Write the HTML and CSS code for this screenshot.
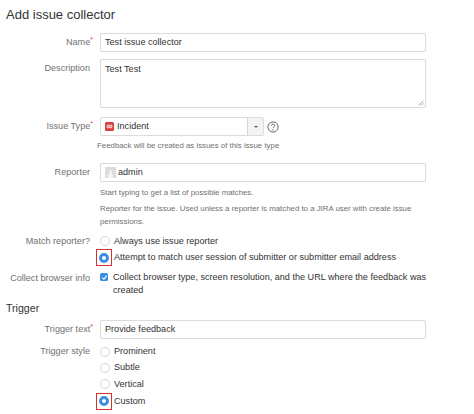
FILE: index.html
```html
<!DOCTYPE html>
<html lang="en">
<head>
  <meta charset="UTF-8">
  <title>Add issue collector</title>
  <link rel="stylesheet" href="styles.css">
</head>
<body>
<div class="page">
  <h1 class="title">Add issue collector</h1>

  <div class="row row-name">
    <div class="label">Name<span class="req">*</span></div>
    <div class="field"><div class="input">Test issue collector</div></div>
  </div>

  <div class="row row-description">
    <div class="label label-top">Description</div>
    <div class="field">
      <div class="input textarea">Test Test
        <svg class="grip" width="6" height="6" viewBox="0 0 6 6"><path d="M0.5 5.5L5.5 0.5M3 5.5L5.5 3" stroke="#8a8a8a" stroke-width="0.7" fill="none"/></svg>
      </div>
    </div>
  </div>

  <div class="row row-type">
    <div class="label">Issue Type<span class="req">*</span></div>
    <div class="field">
      <div class="type-line">
        <div class="input select">
          <div class="select-value">
            <svg class="type-icon" width="9" height="9" viewBox="0 0 9 9"><rect width="9" height="9" rx="1.5" fill="#d9403c"/><path d="M2.2 3.2h1.9v2.6H2.2zM4.9 3.2h1.9v2.6H4.9z" fill="none" stroke="#fff" stroke-width="0.8"/></svg>
            Incident
          </div>
          <div class="select-arrow"><span class="caret"></span></div>
        </div>
        <svg class="help" width="12" height="12" viewBox="0 0 12 12"><circle cx="6" cy="6" r="5.1" fill="none" stroke="#555" stroke-width="0.9"/><path d="M4.4 4.7c0-2.1 3.3-2.1 3.3 0 0 1.2-1.7 1.3-1.7 2.5" fill="none" stroke="#555" stroke-width="0.9"/><circle cx="6" cy="8.9" r="0.6" fill="#555"/></svg>
      </div>
      <div class="hint hint-type">Feedback will be created as issues of this issue type</div>
    </div>
  </div>

  <div class="row row-reporter">
    <div class="label">Reporter</div>
    <div class="field">
      <div class="input reporter">
        <svg class="avatar" width="11" height="11" viewBox="0 0 11 11"><rect width="11" height="11" fill="#dcdcdc"/><path d="M3 11V8.5L4.4 7V3.2h2.4V7l1.4 1.5V11z" fill="#f4f4f4"/></svg>
        admin
      </div>
      <div class="hint hint-first">Start typing to get a list of possible matches.</div>
      <div class="hint hint-second">Reporter for the issue. Used unless a reporter is matched to a JIRA user with create issue permissions.</div>
    </div>
  </div>

  <div class="row row-match">
    <div class="label">Match reporter?</div>
    <div class="field">
      <div class="option"><span class="radio"></span>Always use issue reporter</div>
      <div class="option"><span class="mark"><span class="radio checked"></span></span>Attempt to match user session of submitter or submitter email address</div>
    </div>
  </div>

  <div class="row row-browser">
    <div class="label">Collect browser info</div>
    <div class="field">
      <div class="option option-wrap">
        <span class="checkbox"><svg width="7" height="7" viewBox="0 0 7 7"><path d="M1.2 3.6L2.9 5.2L5.8 1.6" fill="none" stroke="#fff" stroke-width="1.1"/></svg></span>
        <span class="option-text">Collect browser type, screen resolution, and the URL where the feedback was created</span>
      </div>
    </div>
  </div>

  <h2 class="subtitle">Trigger</h2>

  <div class="row row-trigger">
    <div class="label">Trigger text<span class="req">*</span></div>
    <div class="field"><div class="input">Provide feedback</div></div>
  </div>

  <div class="row row-style">
    <div class="label">Trigger style</div>
    <div class="field">
      <div class="option"><span class="radio"></span>Prominent</div>
      <div class="option"><span class="radio"></span>Subtle</div>
      <div class="option"><span class="radio"></span>Vertical</div>
      <div class="option"><span class="mark"><span class="radio checked"></span></span>Custom</div>
    </div>
  </div>
</div>
</body>
</html>
```

FILE: styles.css
```css
body {
  margin: 0;
  background-color: #fff;
  color: #333;
  font-family: "Liberation Sans", Arial, sans-serif;
  font-size: 9.1px;
  overflow: hidden;
}

.page {
  padding: 7px 48px 0 6px;
}

.title {
  margin: 0;
  font-size: 13px;
  font-weight: normal;
  line-height: 16px;
}

.subtitle {
  margin: 4px 0 5px;
  font-size: 10.6px;
  font-weight: normal;
  line-height: 14px;
}

.row {
  display: grid;
  grid-template-columns: 85px 1fr;
  column-gap: 9px;
}

.row-name { margin-top: 10px; }
.row-description { margin-top: 7px; }
.row-type { margin-top: 9px; }
.row-reporter { margin-top: 11px; }
.row-match { margin-top: 5px; }
.row-browser { margin-top: 4px; }
.row-style { margin-top: 4px; }

.label {
  color: #707070;
  text-align: right;
  line-height: 19px;
  padding-right: 1px;
  white-space: nowrap;
}

.label-top {
  line-height: 13px;
  padding-top: 3px;
}

.row-match .label,
.row-style .label,
.row-browser .label {
  line-height: 13px;
  padding-top: 2px;
}

.req {
  color: #d04437;
  font-size: 7px;
  position: relative;
  top: -3px;
  margin-right: -3px;
}

.input {
  height: 19px;
  box-sizing: border-box;
  border: 1px solid #dcdcdc;
  border-radius: 2px;
  padding: 0 4px;
  color: #333;
  line-height: 17px;
  box-shadow: 0 0 1px #e4e4e4;
}

.textarea {
  height: 49px;
  padding-top: 1px;
  position: relative;
}

.grip {
  position: absolute;
  right: 1px;
  bottom: 1px;
}

.type-line {
  display: flex;
  align-items: center;
  gap: 2px;
}

.select {
  width: 164px;
  display: flex;
  padding: 0;
  overflow: hidden;
}

.select-value {
  flex: 1;
  display: flex;
  align-items: center;
  gap: 3px;
  padding-left: 4px;
}

.select-arrow {
  width: 15px;
  background-color: #f3f3f3;
  border-left: 1px solid #d6d6d6;
  display: flex;
  align-items: center;
  justify-content: center;
}

.caret {
  width: 0;
  height: 0;
  border-left: 2px solid transparent;
  border-right: 2px solid transparent;
  border-top: 2px solid #555;
}

.help {
  margin-left: 1px;
}

.hint {
  color: #707070;
  font-size: 7.85px;
  line-height: 13px;
}

.hint-type {
  margin: 3px 0 0 -3px;
}

.hint-first {
  margin-top: 4px;
}

.hint-second {
  margin-top: 3px;
}

.reporter {
  display: flex;
  align-items: center;
  gap: 2px;
}

.option {
  display: flex;
  align-items: center;
  gap: 4px;
  min-height: 16.4px;
  line-height: 13px;
  color: #333;
}

.option-wrap {
  align-items: flex-start;
  padding-top: 1px;
}

.option-text {
  margin-right: -6px;
}

.radio {
  flex: none;
  width: 10px;
  height: 10px;
  box-sizing: border-box;
  border: 1px solid #d4d4d4;
  border-radius: 50%;
  background-color: #fff;
}

.radio.checked {
  display: block;
  border: 3.5px solid #3b8fe0;
}

.mark {
  flex: none;
  width: 16px;
  height: 17px;
  box-sizing: border-box;
  border: 1.3px solid #d6302a;
  margin: 0 -2px 0 -4px;
  display: flex;
  align-items: center;
  justify-content: center;
}

.checkbox {
  flex: none;
  width: 8px;
  height: 8px;
  margin: 2px 1px 0 0;
  background-color: #3b8fe0;
  border-radius: 1.5px;
  display: flex;
  align-items: center;
  justify-content: center;
}
```
